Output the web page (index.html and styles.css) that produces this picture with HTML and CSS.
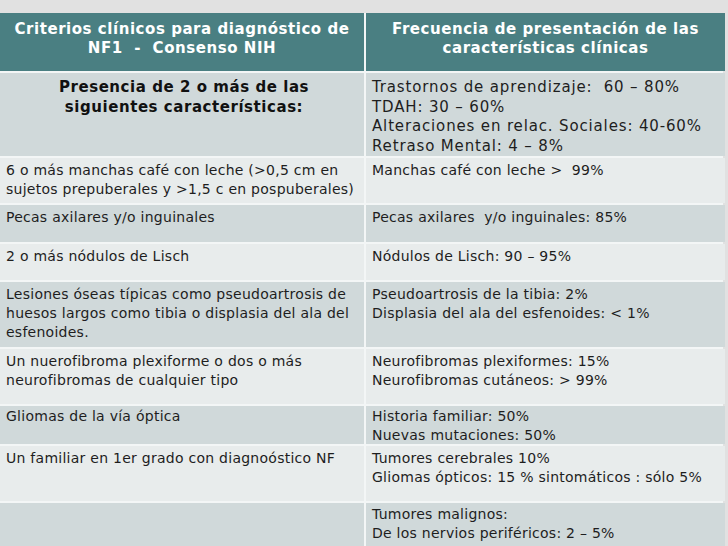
FILE: index.html
```html
<!DOCTYPE html>
<html lang="es">
<head>
<meta charset="utf-8">
<link rel="stylesheet" href="styles.css">
<title>NF1</title>
</head>
<body>
<div class="page">
  <div class="table">
    <div class="cell head">Criterios clínicos para diagnóstico de<br>NF1&nbsp; - &nbsp;Consenso NIH</div>
    <div class="cell head">Frecuencia de presentación de las<br>características clínicas</div>

    <div class="cell dark big bold center">Presencia de 2 o más de las<br>siguientes características:</div>
    <div class="cell dark big">Trastornos de aprendizaje:&nbsp; 60 – 80%<br>TDAH: 30 – 60%<br>Alteraciones en relac. Sociales: 40-60%<br>Retraso Mental: 4 – 8%</div>

    <div class="cell light">6 o más manchas café con leche (&gt;0,5 cm en<br>sujetos prepuberales y &gt;1,5 c en pospuberales)</div>
    <div class="cell light">Manchas café con leche &gt;&nbsp; 99%</div>

    <div class="cell dark">Pecas axilares y/o inguinales</div>
    <div class="cell dark">Pecas axilares&nbsp; y/o inguinales: 85%</div>

    <div class="cell light">2 o más nódulos de Lisch</div>
    <div class="cell light">Nódulos de Lisch: 90 – 95%</div>

    <div class="cell dark">Lesiones óseas típicas como pseudoartrosis de<br>huesos largos como tibia o displasia del ala del<br>esfenoides.</div>
    <div class="cell dark">Pseudoartrosis de la tibia: 2%<br>Displasia del ala del esfenoides: &lt; 1%</div>

    <div class="cell light">Un nuerofibroma plexiforme o dos o más<br>neurofibromas de cualquier tipo</div>
    <div class="cell light">Neurofibromas plexiformes: 15%<br>Neurofibromas cutáneos: &gt; 99%</div>

    <div class="cell dark tight">Gliomas de la vía óptica</div>
    <div class="cell dark tight">Historia familiar: 50%<br>Nuevas mutaciones: 50%</div>

    <div class="cell light">Un familiar en 1er grado con diagnoóstico NF</div>
    <div class="cell light">Tumores cerebrales 10%<br>Gliomas ópticos: 15 % sintomáticos : sólo 5%</div>

    <div class="cell dark snug"></div>
    <div class="cell dark snug">Tumores malignos:<br>De los nervios periféricos: 2 – 5%<br>Feocromocitomas: 2%</div>
  </div>
</div>
</body>
</html>
```

FILE: styles.css
```css
* { box-sizing: border-box; }
html, body {
  margin: 0;
  padding: 0;
  width: 728px;
  height: 546px;
  overflow: hidden;
  background: #e1e1e1;
}
.page {
  padding-top: 13px;
  padding-right: 5px;
}
.table {
  display: grid;
  grid-template-columns: 364px 359px;
  grid-template-rows: 58px 83px 45px 37px 36px 65px 55px 38px 55px 60px;
  gap: 2px;
  background: #f3f6f6;
  font-family: "DejaVu Sans", Verdana, sans-serif;
  color: #1e1e1e;
}
.cell {
  overflow: hidden;
  font-size: 14px;
  letter-spacing: 0.26px;
  line-height: 19px;
  padding: 3px 2px 0 6px;
  white-space: nowrap;
}
.head {
  background: #4a7f82;
  color: #ffffff;
  font-weight: bold;
  font-size: 15px;
  letter-spacing: 0.55px;
  line-height: 18.5px;
  text-align: center;
  padding: 7px 2px 0 2px;
}
.dark { background: #d0d9da; }
.light { background: #e8ecec; }
.tight { padding-top: 1px; line-height: 18.5px; }
.snug { padding-top: 2px; }
.big {
  font-size: 15px;
  letter-spacing: 0.85px;
  line-height: 19.5px;
  padding-top: 5px;
}
.bold { font-weight: bold; color: #111; letter-spacing: 0.55px; }
.center { text-align: center; }
```
